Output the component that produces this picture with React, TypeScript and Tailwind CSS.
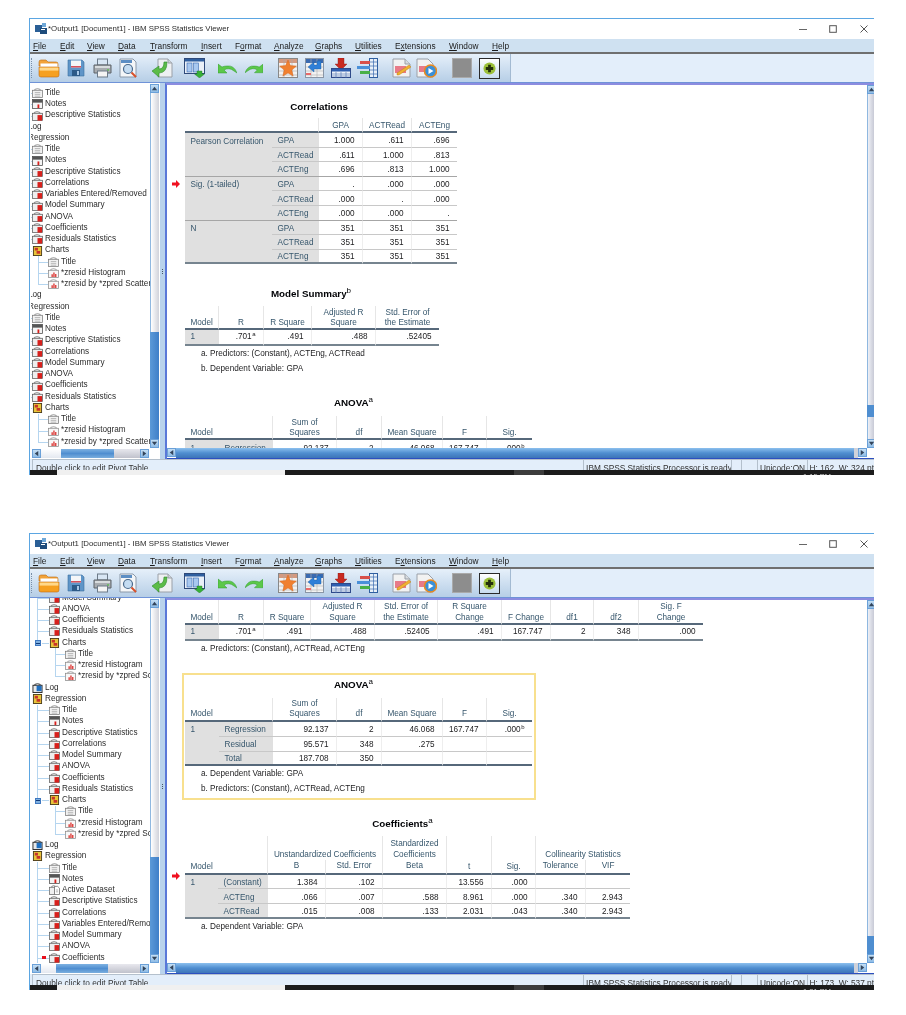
import type { ReactNode } from "react"

// small tree icons, drawn on a 12x11 grid
function TreeIcon({ kind }: { kind: string }) {
  const cls = "w-[11px] h-[10px] shrink-0 mr-[1px]"
  if (kind === "folder")
    return (
      <svg viewBox="0 0 12 11" className={cls}>
        <rect x="1.5" y="0.5" width="9" height="10" fill="#e8c53a" stroke="#4a3a18" />
        <rect x="3" y="2" width="3.5" height="3" fill="#c8342a" />
        <rect x="5" y="5.5" width="4" height="3" fill="#c8342a" />
      </svg>
    )
  if (kind === "log")
    return (
      <svg viewBox="0 0 12 11" className={cls}>
        <path d="M3 3V1.5Q6 0 9 1.5V3" fill="none" stroke="#333" />
        <rect x="1" y="2.5" width="10" height="8" fill="#e8e8e8" stroke="#222" />
        <rect x="5" y="3" width="5.5" height="6" fill="#1f6fc0" />
      </svg>
    )
  if (kind === "title")
    return (
      <svg viewBox="0 0 12 11" className={cls}>
        <path d="M3 3V1.5Q6 0 9 1.5V3" fill="none" stroke="#777" strokeWidth="0.8" />
        <rect x="0.5" y="2.5" width="11" height="8" fill="#f2f2f2" stroke="#777" strokeWidth="0.8" />
        <path d="M3 5h6M3 7h6M3 9h6" stroke="#999" strokeWidth="0.7" />
      </svg>
    )
  if (kind === "notes")
    return (
      <svg viewBox="0 0 12 11" className={cls}>
        <rect x="0.5" y="0.5" width="11" height="10" fill="#f4f4f4" stroke="#444" strokeWidth="0.8" />
        <rect x="0.5" y="0.5" width="11" height="3.5" fill="#555" />
        <rect x="6" y="6" width="2" height="4" fill="#d8201c" />
      </svg>
    )
  if (kind === "chart")
    return (
      <svg viewBox="0 0 12 11" className={cls}>
        <path d="M3 3V1.5Q6 0 9 1.5V3" fill="none" stroke="#888" strokeWidth="0.8" />
        <rect x="0.5" y="2.5" width="11" height="8" fill="#f8f8f8" stroke="#888" strokeWidth="0.8" />
        <path d="M4.5 10V7M6.5 10V5M8.5 10V6.5" stroke="#d8201c" strokeWidth="1.3" />
      </svg>
    )
  if (kind === "active")
    return (
      <svg viewBox="0 0 12 11" className={cls}>
        <path d="M3 3V1.5Q5 0 7 1.5V3" fill="none" stroke="#666" strokeWidth="0.8" />
        <rect x="0.5" y="2.5" width="6" height="8" fill="#f0f0f0" stroke="#666" strokeWidth="0.8" />
        <path d="M6 1.5h3.5l2 2v7H6z" fill="#fff" stroke="#666" strokeWidth="0.8" />
        <path d="M7.5 5.5h2.5M7.5 7.5h2.5" stroke="#888" strokeWidth="0.7" />
      </svg>
    )
  return (
    <svg viewBox="0 0 12 11" className={cls}>
      <path d="M2.5 3V1.5Q5.5 0 8.5 1.5V3" fill="none" stroke="#555" strokeWidth="0.8" />
      <rect x="0.5" y="2.5" width="11" height="8" fill="#eeeeee" stroke="#555" strokeWidth="0.8" />
      <rect x="6" y="4.5" width="5" height="6" fill="#d8201c" />
    </svg>
  )
}

type Row = [number, string, string, string?]

function TreeRow({ row }: { row: Row }) {
  const [depth, kind, label, flag] = row
  return (
    <div className="flex items-center h-[11.25px] whitespace-nowrap">
      {depth === 0 && <span className="w-[1px] shrink-0" />}
      {depth > 0 && <span className="w-[6px] shrink-0" />}
      {depth === 1 && (
        <span className="relative w-[12px] h-full shrink-0">
          {flag === "toggle" ? (
            <>
              <span className="absolute left-0 top-0 h-[3px] border-l border-[#b5d5ef]" />
              <span className="absolute left-[5px] right-0 top-1/2 border-t border-[#b5d5ef]" />
              <span className="absolute left-[-2px] top-[3px] w-[6px] h-[6px] bg-[#7fb0e0] border border-[#3f78c0] flex items-center">
                <span className="w-full h-[1px] bg-[#123a78]" />
              </span>
            </>
          ) : (
            <>
              <span className="absolute left-0 top-0 h-full border-l border-[#b5d5ef]" />
              <span className="absolute left-0 right-0 top-1/2 border-t border-[#b5d5ef]" />
            </>
          )}
          {flag === "arrow" && <span className="absolute left-[5px] top-[4px] w-[4px] h-[3px] bg-[#e8101c]" />}
        </span>
      )}
      {depth === 2 && (
        <>
          <span className="w-[18px] shrink-0" />
          <span className="relative w-[10px] h-full shrink-0">
            <span className={flag === "last" ? "absolute left-0 top-0 h-1/2 border-l border-[#b5d5ef]" : "absolute left-0 top-0 h-full border-l border-[#b5d5ef]"} />
            <span className="absolute left-0 right-0 top-1/2 border-t border-[#b5d5ef]" />
          </span>
        </>
      )}
      <TreeIcon kind={kind} />
      <span className="ml-[1px] text-[8.2px] leading-none text-[#2b2b2b]">{label}</span>
    </div>
  )
}

const regressionA: Row[] = [
  [1, "title", "Title"],
  [1, "notes", "Notes"],
  [1, "table", "Descriptive Statistics"],
  [1, "table", "Correlations"],
  [1, "table", "Variables Entered/Removed"],
  [1, "table", "Model Summary"],
  [1, "table", "ANOVA"],
  [1, "table", "Coefficients"],
  [1, "table", "Residuals Statistics"],
  [1, "folder", "Charts", "toggle"],
  [2, "title", "Title"],
  [2, "chart", "*zresid Histogram"],
  [2, "chart", "*zresid by *zpred Scatter", "last"],
]

const regressionB: Row[] = [
  [1, "title", "Title"],
  [1, "notes", "Notes"],
  [1, "table", "Descriptive Statistics"],
  [1, "table", "Correlations"],
  [1, "table", "Model Summary"],
  [1, "table", "ANOVA"],
  [1, "table", "Coefficients"],
  [1, "table", "Residuals Statistics"],
  [1, "folder", "Charts", "toggle"],
  [2, "title", "Title"],
  [2, "chart", "*zresid Histogram"],
  [2, "chart", "*zresid by *zpred Scatter", "last"],
]

const treeTop: Row[] = [
  [1, "title", "Title"],
  [1, "notes", "Notes"],
  [1, "table", "Descriptive Statistics"],
  [0, "log", "Log"],
  [0, "folder", "Regression"],
  ...regressionA,
  [0, "log", "Log"],
  [0, "folder", "Regression"],
  ...regressionB,
]

const treeBottom: Row[] = [
  [1, "table", "Model Summary"],
  [1, "table", "ANOVA"],
  [1, "table", "Coefficients"],
  [1, "table", "Residuals Statistics"],
  [1, "folder", "Charts", "toggle"],
  [2, "title", "Title"],
  [2, "chart", "*zresid Histogram"],
  [2, "chart", "*zresid by *zpred Sc", "last"],
  [0, "log", "Log"],
  [0, "folder", "Regression"],
  ...regressionB.slice(0, 8),
  [1, "folder", "Charts", "toggle"],
  [2, "title", "Title"],
  [2, "chart", "*zresid Histogram"],
  [2, "chart", "*zresid by *zpred Sc", "last"],
  [0, "log", "Log"],
  [0, "folder", "Regression"],
  [1, "title", "Title"],
  [1, "notes", "Notes"],
  [1, "active", "Active Dataset"],
  [1, "table", "Descriptive Statistics"],
  [1, "table", "Correlations"],
  [1, "table", "Variables Entered/Removed"],
  [1, "table", "Model Summary"],
  [1, "table", "ANOVA"],
  [1, "table", "Coefficients", "arrow"],
]

function Btn({ dir }: { dir: "up" | "down" | "left" | "right" }) {
  const d = { up: "M1 6L4 2l3 4z", down: "M1 2l3 4 3-4z", left: "M6 1L2 4l4 3z", right: "M2 1l4 3-4 3z" }[dir]
  return (
    <div className="w-[9px] h-[9px] shrink-0 bg-gradient-to-b from-[#c4def4] to-[#8fbce6] border border-[#6aa0d8] flex items-center justify-center">
      <svg viewBox="0 0 8 8" className="w-[7px] h-[7px]">
        <path d={d} fill="#33445a" />
      </svg>
    </div>
  )
}

function Tree({ rows, bottom }: { rows: Row[]; bottom?: boolean }) {
  return (
    <div className="w-[130px] shrink-0 flex flex-col bg-white">
      <div className="flex h-[365px]">
        <div className="flex-1 ml-[1px] overflow-hidden">
          <div className={bottom ? "-mt-[6px]" : "-ml-[17px] mt-[4.4px]"}>
            {rows.map((r, i) => (
              <TreeRow key={i} row={r} />
            ))}
          </div>
        </div>
        <div className="w-[10px] shrink-0 flex flex-col mt-[1px]">
          <Btn dir="up" />
          <div className={bottom ? "h-[249px] w-[9px] bg-gradient-to-r from-white to-[#d0d2da] border-l border-[#8fb8e0]" : "h-[239px] w-[9px] bg-gradient-to-r from-white to-[#d0d2da] border-l border-[#8fb8e0]"} />
          <div className="flex-1 w-[9px] bg-gradient-to-r from-[#5c9ad8] to-[#3f7fc8]" />
          <Btn dir="down" />
        </div>
      </div>
      <div className="flex h-[11px] pl-[2px] pt-[1px] pr-[11px] items-start">
        <Btn dir="left" />
        <div className={bottom ? "w-[15px] h-[9px] bg-gradient-to-b from-white to-[#e4e8f0]" : "w-[20px] h-[9px] bg-gradient-to-b from-white to-[#e4e8f0]"} />
        <div className={bottom ? "w-[52px] h-[9px] bg-gradient-to-b from-[#7eb2e2] via-[#4f8ed0] to-[#7aaede]" : "w-[53px] h-[9px] bg-gradient-to-b from-[#7eb2e2] via-[#4f8ed0] to-[#7aaede]"} />
        <div className="flex-1 h-[9px] bg-gradient-to-b from-[#e8e8ee] to-[#c0c2cc]" />
        <Btn dir="right" />
      </div>
    </div>
  )
}

function MainBars({ thumb, low }: { thumb: string; low?: boolean }) {
  return (
    <div className="w-[7px] shrink-0 flex flex-col overflow-hidden">
      <Btn dir="up" />
      <div className={thumb + " bg-gradient-to-r from-[#eef0f6] to-[#c8cad6] border-l border-[#8fb8e0]"} />
      <div className={low ? "h-[18px] bg-[#4f8ed0]" : "h-[12px] bg-[#4f8ed0]"} />
      <div className="flex-1 bg-gradient-to-r from-[#eef0f6] to-[#c8cad6] border-l border-[#8fb8e0]" />
      <Btn dir="down" />
    </div>
  )
}

// pivot table cells
function H({ children, left, span, rows, last, tight }: { children?: ReactNode; left?: boolean; span?: number; rows?: number; last?: boolean; tight?: boolean }) {
  return (
    <th
      colSpan={span}
      rowSpan={rows}
      className={
        (left ? "text-left pl-[5.5px] " : "text-center px-[1px] ") +
        (last ? "" : "border-r border-r-[#e6e6e6] ") +
        (rows ? "border-b-2 border-b-[#56687a] " : "") +
        (tight ? "pb-[1px] " : "pb-0 ") +
        "align-bottom font-normal text-[#36566c] leading-[10.4px]"
      }
    >
      {children}
    </th>
  )
}

function L({ children, rows, end }: { children?: ReactNode; rows?: number; end?: string }) {
  return (
    <td rowSpan={rows} className={(rows ? "align-top pt-[4.5px] " + (end ?? "") + " " : "pt-[3px] ") + "bg-[#e0e0e0] text-[#36566c] text-left pl-[5.5px] leading-none whitespace-nowrap"}>
      {children}
    </td>
  )
}

function V({ children, last }: { children?: ReactNode; last?: boolean }) {
  return <td className={(last ? "" : "border-r border-r-[#eeeeee] ") + "pt-[3px] text-right pr-[7.5px] text-[#1c1c1e] leading-none whitespace-nowrap"}>{children}</td>
}

function Sup({ children }: { children: ReactNode }) {
  return <sup className="text-[6px] ml-[0.5px]">{children}</sup>
}

function TitleSup({ children }: { children: ReactNode }) {
  return <sup className="text-[8px] font-normal">{children}</sup>
}

function Title({ children, className }: { children: ReactNode; className: string }) {
  return <div className={className + " h-[14px] leading-[14px] text-[9.8px] font-bold text-center text-[#010205] whitespace-nowrap"}>{children}</div>
}

function Note({ children }: { children: ReactNode }) {
  return <div className="h-[14.5px] leading-[14.5px] pl-[16px] text-[8.2px] text-[#1c1c1e] whitespace-nowrap">{children}</div>
}

const tableCls = "table-fixed border-separate border-spacing-0 text-[8.2px]"
const headLine = "[&>th]:border-b-2 [&>th]:border-b-[#56687a]"
const rowLine = "h-[14.6px] [&>td]:border-b [&>td]:border-b-[#c8c8c8]"
const groupLine = "h-[14.6px] [&>td]:border-b [&>td]:border-b-[#a6a6a6]"
const endLine = "h-[14.6px] [&>td]:border-b-2 [&>td]:border-b-[#76848f]"
const spanEnd = "!border-b-2 !border-b-[#76848f]"

function Correlations() {
  const groups: [string, string[][]][] = [
    ["Pearson Correlation", [["GPA", "1.000", ".611", ".696"], ["ACTRead", ".611", "1.000", ".813"], ["ACTEng", ".696", ".813", "1.000"]]],
    ["Sig. (1-tailed)", [["GPA", ".", ".000", ".000"], ["ACTRead", ".000", ".", ".000"], ["ACTEng", ".000", ".000", "."]]],
    ["N", [["GPA", "351", "351", "351"], ["ACTRead", "351", "351", "351"], ["ACTEng", "351", "351", "351"]]],
  ]
  return (
    <>
      <Title className="w-[272px] mt-[15px] pr-[4px]">Correlations</Title>
      <table className={"w-[272px] mt-[4px] " + tableCls}>
        <colgroup>
          <col className="w-[87px]" />
          <col className="w-[47px]" />
          <col className="w-[44px]" />
          <col className="w-[49px]" />
          <col className="w-[45px]" />
        </colgroup>
        <thead>
          <tr className={"h-[15px] " + headLine}>
            <H span={2} />
            <H>GPA</H>
            <H>ACTRead</H>
            <H last>ACTEng</H>
          </tr>
        </thead>
        <tbody>
          {groups.map(([name, rows], g) =>
            rows.map((r, i) => (
              <tr key={name + i} className={g === 2 && i === 2 ? endLine : i === 2 ? groupLine : rowLine}>
                {i === 0 && (
                  <L rows={3} end={g === 2 ? spanEnd : "!border-b-[#a6a6a6]"}>
                    {name}
                  </L>
                )}
                <L>{r[0]}</L>
                <V>{r[1]}</V>
                <V>{r[2]}</V>
                <V last>{r[3]}</V>
              </tr>
            ))
          )}
        </tbody>
      </table>
    </>
  )
}

function ModelTop() {
  return (
    <>
      <Title className="w-[254px] mt-[23px] pr-[2px]">
        Model Summary<TitleSup>b</TitleSup>
      </Title>
      <table className={"w-[254px] mt-[5px] " + tableCls}>
        <colgroup>
          <col className="w-[34px]" />
          <col className="w-[45px]" />
          <col className="w-[48px]" />
          <col className="w-[64px]" />
          <col className="w-[63px]" />
        </colgroup>
        <thead>
          <tr className={"h-[24px] " + headLine}>
            <H left>Model</H>
            <H>R</H>
            <H>R Square</H>
            <H>
              Adjusted R
              <br />
              Square
            </H>
            <H last>
              Std. Error of
              <br />
              the Estimate
            </H>
          </tr>
        </thead>
        <tbody>
          <tr className="h-[16px] [&>td]:pt-0 [&>td]:border-b-2 [&>td]:border-b-[#76848f]">
            <L>1</L>
            <V>
              .701<Sup>a</Sup>
            </V>
            <V>.491</V>
            <V>.488</V>
            <V last>.52405</V>
          </tr>
        </tbody>
      </table>
      <div className="mt-[1px]">
        <Note>a. Predictors: (Constant), ACTEng, ACTRead</Note>
        <Note>b. Dependent Variable: GPA</Note>
      </div>
    </>
  )
}

function ModelWide() {
  return (
    <>
      <table className={"w-[518px] " + tableCls}>
        <colgroup>
          <col className="w-[34px]" />
          <col className="w-[45px]" />
          <col className="w-[47px]" />
          <col className="w-[64px]" />
          <col className="w-[63px]" />
          <col className="w-[64px]" />
          <col className="w-[49px]" />
          <col className="w-[43px]" />
          <col className="w-[45px]" />
          <col className="w-[64px]" />
        </colgroup>
        <thead>
          <tr className={"h-[25px] " + headLine}>
            <H left>Model</H>
            <H>R</H>
            <H>R Square</H>
            <H>
              Adjusted R
              <br />
              Square
            </H>
            <H>
              Std. Error of
              <br />
              the Estimate
            </H>
            <H>
              R Square
              <br />
              Change
            </H>
            <H>F Change</H>
            <H>df1</H>
            <H>df2</H>
            <H last>
              Sig. F
              <br />
              Change
            </H>
          </tr>
        </thead>
        <tbody>
          <tr className="h-[16px] [&>td]:pt-0 [&>td]:border-b-2 [&>td]:border-b-[#76848f]">
            <L>1</L>
            <V>
              .701<Sup>a</Sup>
            </V>
            <V>.491</V>
            <V>.488</V>
            <V>.52405</V>
            <V>.491</V>
            <V>167.747</V>
            <V>2</V>
            <V>348</V>
            <V last>.000</V>
          </tr>
        </tbody>
      </table>
      <div className="mt-[1px]">
        <Note>a. Predictors: (Constant), ACTRead, ACTEng</Note>
      </div>
    </>
  )
}

function Anova({ top }: { top?: boolean }) {
  return (
    <>
      <Title className={top ? "w-[347px] mt-[20px] pr-[10px]" : "w-[347px] pr-[10px]"}>
        ANOVA<TitleSup>a</TitleSup>
      </Title>
      <table className={"w-[347px] mt-[6px] " + tableCls}>
        <colgroup>
          <col className="w-[34px]" />
          <col className="w-[54px]" />
          <col className="w-[64px]" />
          <col className="w-[45px]" />
          <col className="w-[61px]" />
          <col className="w-[44px]" />
          <col className="w-[45px]" />
        </colgroup>
        <thead>
          <tr className={"h-[24px] " + headLine}>
            <H left span={2}>
              Model
            </H>
            <H>
              Sum of
              <br />
              Squares
            </H>
            <H>df</H>
            <H>Mean Square</H>
            <H>F</H>
            <H last>Sig.</H>
          </tr>
        </thead>
        <tbody>
          <tr className="h-[15.5px] [&>td]:border-b [&>td]:border-b-[#c8c8c8]">
            <L rows={3} end="!border-b-2 !border-b-[#56687a]">
              1
            </L>
            <L>Regression</L>
            <V>92.137</V>
            <V>2</V>
            <V>46.068</V>
            <V>167.747</V>
            <V last>
              .000<Sup>b</Sup>
            </V>
          </tr>
          <tr className={rowLine}>
            <L>Residual</L>
            <V>95.571</V>
            <V>348</V>
            <V>.275</V>
            <V />
            <V last />
          </tr>
          <tr className="h-[14.6px] [&>td]:border-b-2 [&>td]:border-b-[#56687a]">
            <L>Total</L>
            <V>187.708</V>
            <V>350</V>
            <V />
            <V />
            <V last />
          </tr>
        </tbody>
      </table>
    </>
  )
}

function Coefficients() {
  const rows = [
    ["(Constant)", "1.384", ".102", "", "13.556", ".000", "", ""],
    ["ACTEng", ".066", ".007", ".588", "8.961", ".000", ".340", "2.943"],
    ["ACTRead", ".015", ".008", ".133", "2.031", ".043", ".340", "2.943"],
  ]
  return (
    <>
      <Title className="w-[445px] mt-[17px] pr-[10px]">
        Coefficients<TitleSup>a</TitleSup>
      </Title>
      <table className={"w-[445px] mt-[5px] " + tableCls}>
        <colgroup>
          <col className="w-[33px]" />
          <col className="w-[50px]" />
          <col className="w-[58px]" />
          <col className="w-[57px]" />
          <col className="w-[64px]" />
          <col className="w-[45px]" />
          <col className="w-[44px]" />
          <col className="w-[50px]" />
          <col className="w-[44px]" />
        </colgroup>
        <thead>
          <tr className="h-[24px]">
            <H left span={2} rows={2}>
              Model
            </H>
            <H span={2}>Unstandardized Coefficients</H>
            <H>
              Standardized
              <br />
              Coefficients
            </H>
            <H rows={2}>t</H>
            <H rows={2}>Sig.</H>
            <H span={2} last>
              Collinearity Statistics
            </H>
          </tr>
          <tr className={"h-[14.7px] " + headLine}>
            <H tight>B</H>
            <H tight>Std. Error</H>
            <H tight>Beta</H>
            <H tight>Tolerance</H>
            <H tight last>
              VIF
            </H>
          </tr>
        </thead>
        <tbody>
          {rows.map((r, i) => (
            <tr key={r[0]} className={i === 2 ? endLine : rowLine}>
              {i === 0 && (
                <L rows={3} end={spanEnd}>
                  1
                </L>
              )}
              <L>{r[0]}</L>
              <V>{r[1]}</V>
              <V>{r[2]}</V>
              <V>{r[3]}</V>
              <V>{r[4]}</V>
              <V>{r[5]}</V>
              <V>{r[6]}</V>
              <V last>{r[7]}</V>
            </tr>
          ))}
        </tbody>
      </table>
      <div className="mt-[1px]">
        <Note>a. Dependent Variable: GPA</Note>
      </div>
    </>
  )
}

function RedArrow({ className }: { className: string }) {
  return (
    <svg viewBox="0 0 8 8" className={"absolute w-[8px] h-[8px] " + className}>
      <path d="M0 2.5h4V0l4 4-4 4V5.5H0z" fill="#f01020" />
    </svg>
  )
}

function Menu() {
  const items: [string, string, string][] = [
    ["", "F", "ile"],
    ["", "E", "dit"],
    ["", "V", "iew"],
    ["", "D", "ata"],
    ["", "T", "ransform"],
    ["", "I", "nsert"],
    ["F", "o", "rmat"],
    ["", "A", "nalyze"],
    ["", "G", "raphs"],
    ["", "U", "tilities"],
    ["E", "x", "tensions"],
    ["", "W", "indow"],
    ["", "H", "elp"],
  ]
  const widths = ["w-[27px]", "w-[27px]", "w-[31px]", "w-[32px]", "w-[51px]", "w-[34px]", "w-[39px]", "w-[41px]", "w-[40px]", "w-[40px]", "w-[54px]", "w-[43px]", "w-[30px]"]
  return (
    <div className="flex items-center h-[15px] pl-[3px] pt-[1px] bg-[#cfe1f1] border-b-2 border-[#6f6f6f] text-[8.3px] text-[#1a1a1a]">
      {items.map((m, i) => (
        <span key={m[1] + m[2]} className={widths[i] + " shrink-0 leading-none"}>
          {m[0]}
          <span className="underline">{m[1]}</span>
          {m[2]}
        </span>
      ))}
    </div>
  )
}

function Toolbar() {
  return (
    <div className="flex h-[29px] bg-[#e3eefa] border-b border-[#6f93d8]">
      <div className="flex items-center w-[481px] bg-gradient-to-b from-[#e6f0fa] to-[#b6cee6] border-r border-[#a3bad2] pl-[1px]">
        <span className="w-[1px] h-[20px] border-l border-dotted border-[#7a8fa8]" />
        <svg viewBox="0 0 22 20" className="ml-[6px] w-[22px] h-[20px]">
          <path d="M1 4q0-2 2-2h5l2 2h8q2 0 2 2v2H1z" fill="#f2a33a" stroke="#b86a10" strokeWidth="0.6" />
          <rect x="2.5" y="5.5" width="17" height="4" fill="#fff" />
          <path d="M1 9h20v8q0 2-2 2H3q-2 0-2-2z" fill="#f6a020" stroke="#c06a10" strokeWidth="0.6" />
          <rect x="1.6" y="9.6" width="18.8" height="3" fill="#ffd88a" />
        </svg>
        <svg viewBox="0 0 18 20" className="ml-[7px] w-[18px] h-[20px]">
          <path d="M1 2h14l2 2v14H1z" fill="#5f95c8" stroke="#3a6ea0" strokeWidth="0.6" />
          <rect x="4" y="2.5" width="10" height="7" fill="#f4f6f8" />
          <rect x="4" y="8" width="10" height="1.5" fill="#d8505a" />
          <rect x="5" y="12" width="8" height="6" fill="#2c5a88" />
          <rect x="10" y="13" width="2" height="4" fill="#a8c8e8" />
        </svg>
        <svg viewBox="0 0 19 20" className="ml-[8px] w-[19px] h-[20px]">
          <rect x="4.5" y="1" width="10" height="6" fill="#d8e6f4" stroke="#6c7a88" />
          <path d="M1 7h17v8H1z" fill="#a8acb0" stroke="#5c6268" />
          <rect x="2" y="8" width="15" height="2" fill="#d8dcde" />
          <circle cx="15" cy="12" r="1" fill="#5fc050" />
          <rect x="4.5" y="13" width="10" height="6" fill="#f4f4f4" stroke="#6c7a88" />
        </svg>
        <svg viewBox="0 0 19 20" className="ml-[7px] w-[19px] h-[20px]">
          <path d="M1 1h13l3 3v15H1z" fill="#f4f6f8" stroke="#8a98a8" />
          <rect x="2" y="2" width="11" height="3" fill="#5c8ec4" />
          <circle cx="9" cy="11" r="4.5" fill="#c4dcf2" stroke="#4a6a8c" strokeWidth="1.2" />
          <path d="M12.5 14.5L17 19" stroke="#d8502a" strokeWidth="2" />
        </svg>
        <svg viewBox="0 0 22 20" className="ml-[13px] w-[22px] h-[20px]">
          <path d="M7 1h10l4 4v14H7z" fill="#eef0f2" stroke="#9aa0a8" />
          <path d="M17 1v4h4" fill="#d0d4d8" stroke="#9aa0a8" />
          <path d="M13 4q0 7-5 7V8l-7 5 7 6v-4q8 0 8-11z" fill="#5cbc48" stroke="#2e8a2c" strokeWidth="0.6" />
        </svg>
        <svg viewBox="0 0 21 20" className="ml-[11px] w-[21px] h-[20px]">
          <rect x="0.5" y="0.5" width="20" height="15" fill="#eaf0f8" stroke="#2f4a7a" />
          <rect x="1" y="1" width="19" height="2.5" fill="#2f5fa0" />
          <rect x="3" y="5" width="5" height="9" fill="#a8c8f0" stroke="#3a6ab0" strokeWidth="0.6" />
          <rect x="9.5" y="5" width="5" height="9" fill="#a8c8f0" stroke="#3a6ab0" strokeWidth="0.6" />
          <path d="M13 13h5v3h2.5l-5 4-5-4H13z" fill="#38b038" stroke="#1e7a1e" strokeWidth="0.4" />
        </svg>
        <svg viewBox="0 0 19 12" className="ml-[13px] w-[19px] h-[12px]">
          <path d="M0 2v9h9L6 8q5-3 10 1l3 2q-3-8-10-7-3 0-5 1z" fill="#5cc84a" stroke="#2e9a2c" strokeWidth="0.5" />
        </svg>
        <svg viewBox="0 0 19 12" className="ml-[8px] w-[18px] h-[12px]">
          <path d="M19 2v9h-9l3-3q-5-3-10 1L0 11q3-8 10-7 3 0 5 1z" fill="#5cc84a" stroke="#2e9a2c" strokeWidth="0.5" />
        </svg>
        <svg viewBox="0 0 20 20" className="ml-[15px] w-[20px] h-[20px]">
          <rect x="0.5" y="0.5" width="19" height="19" fill="#f2f2f2" stroke="#888" />
          <rect x="1" y="1" width="18" height="4" fill="#d49a80" />
          <path d="M1 9h18M1 13h18M1 17h18M6 1v18M14 1v18" stroke="#aaa" strokeWidth="0.6" />
          <path d="M10 2l2.4 5.6 6 .5-4.6 4 1.4 6L10 15l-5.2 3.1 1.4-6-4.6-4 6-.5z" fill="#f08030" stroke="#d05a10" strokeWidth="0.4" />
        </svg>
        <svg viewBox="0 0 19 20" className="ml-[7px] w-[19px] h-[20px]">
          <rect x="0.5" y="0.5" width="18" height="19" fill="#f2f2f2" stroke="#8a96a6" />
          <rect x="1" y="1" width="17" height="4" fill="#3a6ab0" />
          <path d="M1 9h17M1 13h17M1 17h17M6 1v18M12 1v18" stroke="#b0b0b0" strokeWidth="0.6" />
          <path d="M16 3v8H9v3L3 9l6-5v3h3V3z" fill="#2f7fd8" stroke="#1a5aa0" strokeWidth="0.4" />
          <rect x="1" y="15" width="5" height="2" fill="#e86a6a" />
        </svg>
        <svg viewBox="0 0 20 20" className="ml-[7px] w-[20px] h-[20px]">
          <path d="M7 0h6v6h3l-6 6-6-6h3z" fill="#c82a20" stroke="#8a1a14" strokeWidth="0.4" />
          <rect x="0.5" y="10.5" width="19" height="9" fill="#eef2f8" stroke="#2f4a8a" />
          <rect x="1" y="11" width="18" height="2.5" fill="#2f5fb0" />
          <path d="M1 16h18M1 18h18M5 14v6M10 14v6M15 14v6" stroke="#4a70b0" strokeWidth="0.6" />
        </svg>
        <svg viewBox="0 0 21 20" className="ml-[6px] w-[21px] h-[20px]">
          <rect x="12.5" y="0.5" width="8" height="19" fill="#e8f0f8" stroke="#2f5fa0" />
          <path d="M13 4h7M13 8h7M13 12h7M13 16h7M16.5 1v18" stroke="#3a6ab0" strokeWidth="0.7" />
          <rect x="3" y="3" width="10" height="3" fill="#d8504a" />
          <rect x="0" y="8" width="13" height="3" fill="#4a90d8" />
          <rect x="3" y="13" width="10" height="3" fill="#48b048" />
        </svg>
        <svg viewBox="0 0 20 20" className="ml-[14px] w-[20px] h-[20px]">
          <path d="M1 1h12l5 5v13H1z" fill="#f2f2f2" stroke="#9aa0a8" />
          <path d="M13 1v5h5" fill="#d8dce0" stroke="#9aa0a8" />
          <rect x="3" y="8" width="11" height="7" fill="#e87a88" />
          <path d="M5 15L17 7l2 2-12 8H5z" fill="#f0b030" stroke="#b07a10" strokeWidth="0.4" />
        </svg>
        <svg viewBox="0 0 21 20" className="ml-[4px] w-[21px] h-[20px]">
          <path d="M1 1h11l5 5v13H1z" fill="#f2f2f2" stroke="#9aa0a8" />
          <rect x="3" y="8" width="9" height="6" fill="#e87a88" />
          <circle cx="14.5" cy="13" r="6" fill="#3a90d8" stroke="#e88a20" strokeWidth="1.6" />
          <path d="M12.5 10l5 3-5 3z" fill="#fff" />
        </svg>
        <div className="ml-[15px] w-[20px] h-[20px] bg-[#8d8d8d] border border-[#aaa]" />
        <div className="ml-[7px] w-[21px] h-[21px] border border-[#2a2a2a] bg-gradient-to-b from-white to-[#c8dcee] flex items-center justify-center">
          <svg viewBox="0 0 14 14" className="w-[13px] h-[13px]">
            <circle cx="7" cy="7" r="6.5" fill="#9cc03a" />
            <path d="M5.5 3h3v2.5H11v3H8.5V11h-3V8.5H3v-3h2.5z" fill="#25300c" />
          </svg>
        </div>
      </div>
    </div>
  )
}

function Window({ left, top, right, time, mainThumb, low, arrow, children }: { left: Row[]; top?: boolean; right: string; time: string; mainThumb: string; low?: boolean; arrow: string; children: ReactNode }) {
  return (
    <div className="ml-[29px] w-[845px] h-[457px] border-t border-l border-[#5ba6e2] font-['Liberation_Sans',Arial,sans-serif] overflow-hidden blur-[0.4px]">
      <div className="flex items-center h-[20px] bg-white pl-[5px]">
        <svg viewBox="0 0 12 12" className="w-[12px] h-[12px]">
          <path d="M3 2h3v3H3zM7 0h4v4H7z" fill="#6fa8d8" />
          <rect x="0" y="2" width="7" height="7" fill="#2a5f96" />
          <rect x="5" y="5" width="7" height="6" fill="#1d4c7c" />
          <rect x="6" y="6" width="4" height="1" fill="#fff" />
        </svg>
        <span className="ml-[1px] text-[7.85px] leading-none text-[#2c2c2c]">*Output1 [Document1] - IBM SPSS Statistics Viewer</span>
        <div className="ml-auto flex items-center text-[#555]">
          <svg viewBox="0 0 8 8" className="w-[8px] h-[8px]">
            <path d="M0 4.5h8" stroke="#666" />
          </svg>
          <svg viewBox="0 0 8 8" className="ml-[22px] w-[8px] h-[8px]">
            <rect x="0.7" y="0.7" width="6.6" height="6.6" fill="none" stroke="#555" />
          </svg>
          <svg viewBox="0 0 8 8" className="ml-[23px] mr-[6px] w-[8px] h-[8px]">
            <path d="M0.5 0.5l7 7M7.5 0.5l-7 7" stroke="#555" />
          </svg>
        </div>
      </div>
      <Menu />
      <Toolbar />
      <div className="flex h-[376px] bg-[#b9d3ec]">
        <Tree rows={left} bottom={!top} />
        <div className="w-[5px] shrink-0 flex flex-col items-center justify-center gap-[1px]">
          <span className="w-[1px] h-[1px] bg-[#456]" />
          <span className="w-[1px] h-[1px] bg-[#456]" />
          <span className="w-[1px] h-[1px] bg-[#456]" />
        </div>
        <div className="relative flex-1 flex flex-col min-w-0 bg-white border-l-2 border-t-2 border-l-[#5a78d8] border-t-[#8c8ce0]">
          <div className="flex h-[363px]">
            <div className="flex-1 min-w-0 overflow-hidden pl-[18px]">{children}</div>
            <MainBars thumb={mainThumb} low={low} />
          </div>
          <div className="flex h-[11px] border-b border-[#2c4fc0]">
            <Btn dir="left" />
            <div className="flex-1 bg-gradient-to-b from-[#8cc0ee] via-[#4f8ed0] to-[#3d74b8]" />
            <div className="w-[4px] bg-[#d0d2da]" />
            <Btn dir="right" />
            <div className="w-[7px] bg-white" />
          </div>
          <RedArrow className={arrow} />
        </div>
      </div>
      <div className="flex h-[11px] overflow-hidden bg-[#e3eefa] text-[8.3px] leading-none text-[#333]">
        <div className="w-[555px] ml-[2px] pl-[3px] pt-[4px] border-t border-l border-[#b4c0cc] whitespace-nowrap">Double click to edit Pivot Table</div>
        <div className="w-[148px] pl-[2px] pt-[4px] border-t border-l border-[#b4c0cc] whitespace-nowrap">IBM SPSS Statistics Processor is ready</div>
        <div className="w-[10px] border-t border-l border-[#b4c0cc]" />
        <div className="w-[16px] border-t border-l border-[#b4c0cc]" />
        <div className="w-[50px] pl-[2px] pt-[4px] border-t border-l border-[#b4c0cc] whitespace-nowrap">Unicode:ON</div>
        <div className="flex-1 pl-[2px] pt-[4px] border-t border-l border-[#b4c0cc] whitespace-nowrap">{right}</div>
      </div>
      <div className="flex h-[5px] overflow-hidden">
        <div className="w-[27px] bg-[#1c1c1c]" />
        <div className="w-[228px] bg-[#f0f0f0]" />
        <div className="w-[229px] bg-[#1c1c1c]" />
        <div className="w-[30px] bg-[#3c3c3c]" />
        <div className="flex-1 bg-[#1c1c1c] pl-[259px] pt-[3px] text-[7.5px] text-[#cfcfcf] leading-none whitespace-nowrap">{time}</div>
      </div>
    </div>
  )
}

export default function App() {
  return (
    <div className="w-[906px] h-[1015px] bg-white pt-[18px] overflow-hidden">
      <Window left={treeTop} top right="H: 162, W: 324 pt" time="1:15 PM" mainThumb="h-[311px]" arrow="left-[5px] top-[95px]">
        <Correlations />
        <ModelTop />
        <Anova top />
      </Window>
      <div className="h-[58px]" />
      <Window left={treeBottom} right="H: 173, W: 537 pt" time="1:21 PM" mainThumb="h-[332px]" low arrow="left-[5px] top-[272px]">
        <ModelWide />
        <div className="-ml-[3px] mt-[16px] w-[354px] pl-[1px] pt-[3px] pb-[2px] border-2 border-[#f8e08e]">
          <Anova />
          <div className="mt-[1px]">
            <Note>a. Dependent Variable: GPA</Note>
            <Note>b. Predictors: (Constant), ACTRead, ACTEng</Note>
          </div>
        </div>
        <Coefficients />
      </Window>
    </div>
  )
}
